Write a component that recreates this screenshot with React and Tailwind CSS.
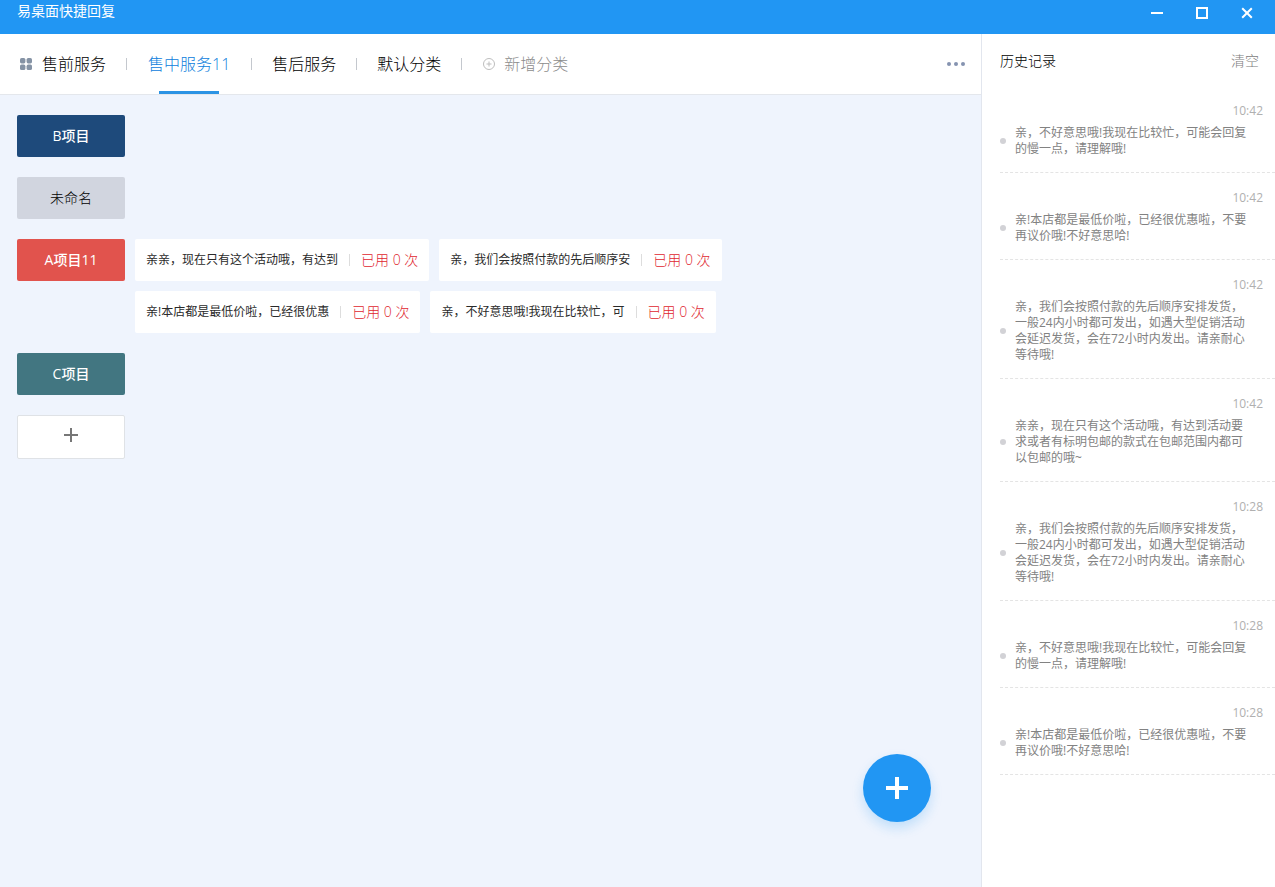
import React from "react";

const tabs = ["售前服务", "售中服务11", "售后服务", "默认分类"];

const groups = [
  { name: "B项目", tone: "bg-[#1e4a7b] text-white font-medium", replies: [] },
  { name: "未命名", tone: "bg-[#d1d5df] text-black", replies: [] },
  {
    name: "A项目11",
    tone: "bg-[#e1534d] text-white font-medium",
    replies: [
      "亲亲，现在只有这个活动哦，有达到",
      "亲，我们会按照付款的先后顺序安",
      "亲!本店都是最低价啦，已经很优惠",
      "亲，不好意思哦!我现在比较忙，可",
    ],
  },
  { name: "C项目", tone: "bg-[#427681] text-white font-medium", replies: [] },
];

const busy = "亲，不好意思哦!我现在比较忙，可能会回复的慢一点，请理解哦!";
const price = "亲!本店都是最低价啦，已经很优惠啦，不要再议价哦!不好意思哈!";
const shipping =
  "亲，我们会按照付款的先后顺序安排发货，一般24内小时都可发出，如遇大型促销活动会延迟发货，会在72小时内发出。请亲耐心等待哦!";
const promo = "亲亲，现在只有这个活动哦，有达到活动要求或者有标明包邮的款式在包邮范围内都可以包邮的哦~";

const history = [
  { time: "10:42", text: busy },
  { time: "10:42", text: price },
  { time: "10:42", text: shipping },
  { time: "10:42", text: promo },
  { time: "10:28", text: shipping },
  { time: "10:28", text: busy },
  { time: "10:28", text: price },
];

function TitleBar() {
  return (
    <header className="flex h-[34px] shrink-0 items-start justify-between bg-[#2196f3] pl-[17px] pr-[22px] text-white">
      <h1 className="pt-px text-sm font-normal">易桌面快捷回复</h1>
      <div className="flex gap-[33px] pt-[7px]">
        <button type="button" aria-label="最小化">
          <svg className="block size-3" viewBox="0 0 12 12" fill="none" stroke="currentColor" strokeWidth="2">
            <path d="M0 6h12" />
          </svg>
        </button>
        <button type="button" aria-label="最大化">
          <svg className="block size-3" viewBox="0 0 12 12" fill="none" stroke="currentColor" strokeWidth="2">
            <path d="M1 1h10v10H1z" />
          </svg>
        </button>
        <button type="button" aria-label="关闭">
          <svg className="block size-3" viewBox="0 0 12 12" fill="none" stroke="currentColor" strokeWidth="2">
            <path d="M1.2 1.2l9.6 9.6M10.8 1.2l-9.6 9.6" />
          </svg>
        </button>
      </div>
    </header>
  );
}

function Divider() {
  return <span className="h-3 w-px bg-[#c4c8ce]" />;
}

function TabBar() {
  return (
    <nav className="flex h-[61px] items-center border-b border-[#e4e7ec] bg-white pl-5 pr-4 text-base">
      <svg className="mr-[10px] size-3" viewBox="0 0 12 12" fill="#8593a5">
        <rect width="5.4" height="5.4" rx="1.6" />
        <rect x="6.6" width="5.4" height="5.4" rx="1.6" />
        <rect y="6.6" width="5.4" height="5.4" rx="1.6" />
        <rect x="6.6" y="6.6" width="5.4" height="5.4" rx="1.6" />
      </svg>
      <div className="flex h-full items-center gap-5">
        {tabs.map((tab, i) => (
          <React.Fragment key={tab}>
            <button
              type="button"
              className={
                i === 1
                  ? "relative h-full whitespace-nowrap px-px text-[#0d80dc]"
                  : "h-full whitespace-nowrap text-black"
              }
            >
              {tab}
              {i === 1 && <span className="absolute inset-x-3 bottom-0 h-[3px] bg-[#2b93e4]" />}
            </button>
            <Divider />
          </React.Fragment>
        ))}
        <button type="button" className="flex h-full items-center gap-[9px] whitespace-nowrap pl-px text-[#8c8c8c]">
          <svg className="size-3" viewBox="0 0 12 12" fill="none" stroke="#bdbdbd">
            <circle cx="6" cy="6" r="5.5" />
            <path d="M3.5 6h5M6 3.5v5" />
          </svg>
          新增分类
        </button>
      </div>
      <button type="button" aria-label="更多" className="ml-auto">
        <svg className="block h-1 w-[18px]" viewBox="0 0 18 4" fill="#8593b0">
          <circle cx="2" cy="2" r="2" />
          <circle cx="9" cy="2" r="2" />
          <circle cx="16" cy="2" r="2" />
        </svg>
      </button>
    </nav>
  );
}

function ReplyCard({ text }) {
  return (
    <button type="button" className="flex h-[42px] items-center rounded-xs bg-white px-[11px] whitespace-nowrap">
      <span className="text-xs font-normal text-[#2a2a2a]">{text}</span>
      <span className="mx-[11px] h-3 w-px bg-[#dddddd]" />
      <span className="text-sm text-[#e0262e]">已用 0 次</span>
    </button>
  );
}

function Board() {
  return (
    <main className="flex flex-1 flex-col gap-5 py-5 pl-[17px] pr-4">
      {groups.map((group) => (
        <section key={group.name} className="flex items-start gap-[10px]">
          <button type="button" className={`h-[42px] w-[108px] shrink-0 rounded-xs text-sm ${group.tone}`}>
            {group.name}
          </button>
          <div className="flex flex-wrap gap-[10px]">
            {group.replies.map((text) => (
              <ReplyCard key={text} text={text} />
            ))}
          </div>
        </section>
      ))}
      <button
        type="button"
        aria-label="新增项目"
        className="flex h-11 w-[108px] items-center justify-center rounded-xs border border-[#dfe2e6] bg-white pb-1"
      >
        <svg className="size-[14px]" viewBox="0 0 14 14" fill="none" stroke="#777777" strokeWidth="2">
          <path d="M0 7h14M7 0v14" />
        </svg>
      </button>
    </main>
  );
}

function History() {
  return (
    <aside className="w-[294px] shrink-0 border-l border-[#e2e6ee] bg-white pl-[18px]">
      <div className="flex h-[52px] items-center justify-between pt-px pr-4 text-sm">
        <h2 className="text-black">历史记录</h2>
        <button type="button" className="text-[#7c7c7c]">清空</button>
      </div>
      <ul className="text-xs leading-4 font-normal">
        {history.map((item, i) => (
          <li key={i} className="border-b border-dashed border-[#e4e4e4] pt-[17px] pb-[15px]">
            <time className="block pr-3 text-right text-[#b0b0b0]">{item.time}</time>
            <div className="mt-[6px] flex items-center gap-[9px] pr-6">
              <span className="size-[6px] shrink-0 rounded-full bg-[#d2d2d6]" />
              <p className="flex-1 text-[#828282]">{item.text}</p>
            </div>
          </li>
        ))}
      </ul>
    </aside>
  );
}

export default function App() {
  return (
    <div
      lang="zh-CN"
      className="flex min-h-screen flex-col bg-[#eff4fd] font-['Open_Sans','Noto_Sans_CJK_SC',sans-serif] font-light"
    >
      <TitleBar />
      <div className="flex flex-1">
        <div className="relative flex min-w-0 flex-1 flex-col">
          <TabBar />
          <Board />
          <button
            type="button"
            aria-label="新增快捷回复"
            className="absolute right-[50px] bottom-[65px] flex size-[68px] items-center justify-center rounded-full bg-[#2196f3] text-white shadow-[0_6px_12px_rgba(33,150,243,0.22)]"
          >
            <svg className="size-[22px]" viewBox="0 0 22 22" fill="none" stroke="currentColor" strokeWidth="4">
              <path d="M0 11h22M11 0v22" />
            </svg>
          </button>
        </div>
        <History />
      </div>
    </div>
  );
}
